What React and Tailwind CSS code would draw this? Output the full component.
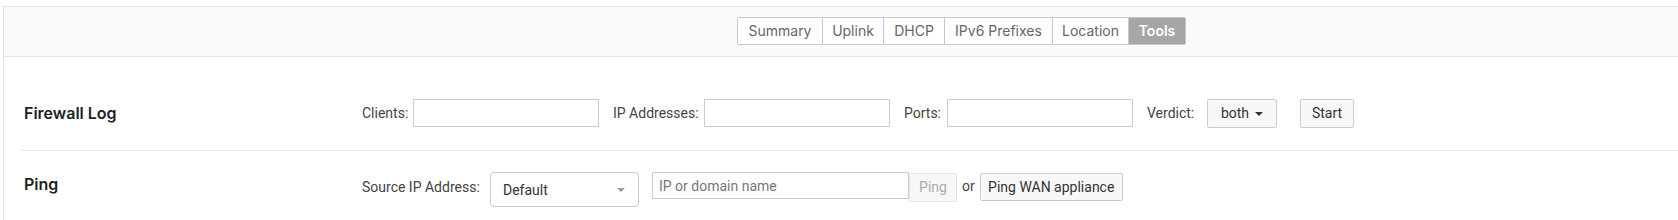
import { useState } from 'react';

const tabs = [
  { name: 'Summary', w: 'w-[84px]' },
  { name: 'Uplink', w: 'w-[61px]' },
  { name: 'DHCP', w: 'w-[61px]' },
  { name: 'IPv6 Prefixes', w: 'w-[108px]' },
  { name: 'Location', w: 'w-[76px]' },
  { name: 'Tools', w: 'w-[57px]' },
];

function Caret({ className = '' }) {
  return (
    <svg width="8" height="4" viewBox="0 0 8 4" className={className}>
      <path d="M0 0h8L4 4z" fill="currentColor" />
    </svg>
  );
}

export default function App() {
  const [active, setActive] = useState('Tools');

  return (
    <div className="w-[1678px] h-[220px] bg-white pt-[6px] pl-[3px] font-['Roboto',sans-serif] text-[#333] overflow-hidden">
      <div className="h-full border-l border-t border-[#e3e3e3]">
        {/* tab bar */}
        <div className="h-[50px] bg-[#fafafa] border-b border-[#e3e3e3] pt-[10px] pl-[733px]">
          <div className="flex h-[28px] border border-[#c8c8c8] rounded-[2px] w-fit font-['Inter',sans-serif] text-[14px]">
            {tabs.map((tab, i) => (
              <button
                key={tab.name}
                onClick={() => setActive(tab.name)}
                className={
                  tab.w + ' h-full leading-[26px] text-center ' +
                  (i > 0 ? 'border-l border-[#c8c8c8] ' : '') +
                  (active === tab.name ? 'bg-[#a6a6a6] text-white font-semibold' : 'bg-white text-[#666]')
                }
              >
                {tab.name}
              </button>
            ))}
          </div>
        </div>

        <div className="pl-[17px]">
          {/* firewall log */}
          <div className="flex items-center h-[94px] border-b border-[#e3e3e3] pt-[19px] text-[14px]">
            <h3 className="w-[341px] pl-[3px] font-['Inter',sans-serif] font-semibold text-[16px] text-[#222]">Firewall Log</h3>
            <label className="w-[51px] text-[#444]">Clients:</label>
            <input className="w-[186px] h-[28px] border border-[#cccccc] outline-none" />
            <label className="ml-[14px] w-[91px] text-[#444]">IP Addresses:</label>
            <input className="w-[186px] h-[28px] border border-[#cccccc] outline-none" />
            <label className="ml-[14px] w-[43px] text-[#444]">Ports:</label>
            <input className="w-[186px] h-[28px] border border-[#cccccc] outline-none" />
            <label className="ml-[14px] w-[60px] text-[#444]">Verdict:</label>
            <button className="w-[70px] h-[29px] flex items-center justify-center gap-[6px] bg-[#f8f8f8] border border-[#cccccc] rounded-[2px] text-[#333]">
              both <Caret className="text-[#333] mt-[1px]" />
            </button>
            <button className="ml-[23px] w-[54px] h-[29px] bg-[#f8f8f8] border border-[#cccccc] rounded-[2px] text-[#333]">
              Start
            </button>
          </div>

          {/* ping */}
          <div className="flex items-start pt-[21px] text-[14px]">
            <h3 className="w-[341px] pl-[3px] leading-[24px] font-['Inter',sans-serif] font-semibold text-[16px] text-[#222]">Ping</h3>
            <label className="w-[128px] mt-[5px] leading-[20px] text-[#444]">Source IP Address:</label>
            <div className="w-[149px] h-[35px] flex items-center justify-between pl-[12px] pr-[13px] border border-[#cccccc] rounded-[4px] text-[#333]">
              <span className="mt-[2px]">Default</span>
              <Caret className="text-[#999]" />
            </div>
            <input
              placeholder="IP or domain name"
              className="ml-[13px] w-[257px] h-[27px] px-[6px] border border-[#cccccc] outline-none placeholder:text-[#777]"
            />
            <button disabled className="mt-[1px] w-[48px] h-[29px] bg-[#f8f8f8] border border-[#e3e3e3] rounded-[2px] text-[#aaa]">
              Ping
            </button>
            <span className="ml-[5px] mt-[4px] leading-[20px] text-[#444]">or</span>
            <button className="ml-[5px] mt-[1px] w-[143px] h-[28px] bg-[#f8f8f8] border border-[#cccccc] rounded-[2px] text-[#333]">
              Ping WAN appliance
            </button>
          </div>
        </div>
      </div>
    </div>
  );
}
